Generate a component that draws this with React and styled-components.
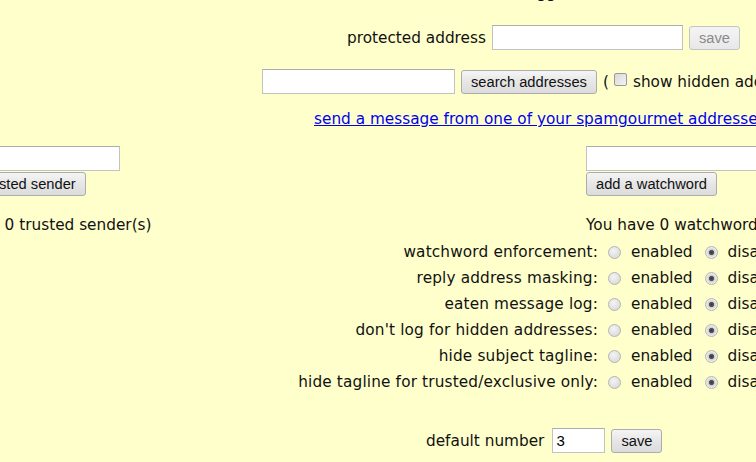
import React from "react";
import styled, { createGlobalStyle } from "styled-components";

const GlobalStyle = createGlobalStyle`
    html, body {
        margin: 0;
        padding: 0;
        background: #ffffcc;
    }
`;

const settings = [
    "watchword enforcement:",
    "reply address masking:",
    "eaten message log:",
    "don't log for hidden addresses:",
    "hide subject tagline:",
    "hide tagline for trusted/exclusive only:",
];

const App = () => {
    return (
        <>
            <GlobalStyle />
            <Page>
                <TopLine>logged</TopLine>

                {/* 보호 주소 */}
                <Row $left={347} $top={23}>
                    <Text>protected address</Text>
                    <Input $width={191} />
                    <Button disabled>save</Button>
                </Row>

                <Row $left={262} $top={19}>
                    <Input $width={193} />
                    <Button>search addresses</Button>
                    <Text>
                        (
                        <Check type="checkbox" />
                        show hidden addresses)
                    </Text>
                </Row>

                <LinkRow>
                    <a href="#">send a message from one of your spamgourmet addresses</a>
                </LinkRow>

                <Columns>
                    <Column>
                        <Input $width={189} />
                        <Button>add a trusted sender</Button>
                        <Count>You have 0 trusted sender(s)</Count>
                    </Column>
                    <Column>
                        <Input $width={189} />
                        <Button>add a watchword</Button>
                        <Count>You have 0 watchwords</Count>
                    </Column>
                </Columns>

                {/* 설정 */}
                <Settings>
                    {settings.map((label, index) => (
                        <SettingRow key={index}>
                            <SettingLabel>{label}</SettingLabel>
                            <Radio type="radio" name={`s${index}`} />
                            <Option>enabled</Option>
                            <Radio type="radio" name={`s${index}`} defaultChecked />
                            <Option>disabled</Option>
                        </SettingRow>
                    ))}
                </Settings>

                <Row $left={426} $top={33}>
                    <Text>default number</Text>
                    <Input $width={53} defaultValue="3" $gap={2} />
                    <Button>save</Button>
                </Row>
            </Page>
        </>
    );
};

export default App;

const Page = styled.div`
    width: 756px;
    height: 462px;
    overflow: hidden;
    background: #ffffcc;
    color: #111;
    font-family: "DejaVu Sans", Verdana, sans-serif;
    font-size: 15.3px;
    white-space: nowrap;
`;

const TopLine = styled.div`
    height: 18px;
    line-height: 18px;
    margin-top: -16px;
    padding-left: 523px;
`;

const Row = styled.div`
    display: flex;
    align-items: center;
    gap: 6px;
    padding-left: ${(p) => p.$left}px;
    margin-top: ${(p) => p.$top}px;
    height: 25px;
`;

const Text = styled.span`
    flex-shrink: 0;
    display: inline-flex;
    align-items: center;
    line-height: 18px;
`;

const Input = styled.input.attrs({ type: "text" })`
    flex-shrink: 0;
    box-sizing: border-box;
    width: ${(p) => p.$width}px;
    height: 25px;
    margin: 0 0 0 ${(p) => p.$gap || 0}px;
    padding: 1px 3px;
    border: 1px solid #c2c2c2;
    border-top-color: #acacac;
    background: #fff;
    font-family: "Liberation Sans", Arial, sans-serif;
    font-size: 15px;
    color: #000;
    outline: none;
`;

const Button = styled.button`
    flex-shrink: 0;
    box-sizing: border-box;
    height: 24px;
    padding: 0 9px;
    margin: 0;
    border: 1px solid #acacac;
    border-radius: 3px;
    background: linear-gradient(#f5f5f5, #e6e6e6 50%, #dcdcdc);
    font-family: "Liberation Sans", Arial, sans-serif;
    font-size: 14.7px;
    color: #111;
    cursor: pointer;

    &:disabled {
        color: #8a8a8a;
        border-color: #c4c4c4;
        background: linear-gradient(#f4f4f4, #e8e8e8);
    }
`;

const Check = styled.input`
    appearance: none;
    box-sizing: border-box;
    width: 13px;
    height: 13px;
    margin: 0 6px 4px 5px;
    border: 1px solid #9a9a9a;
    border-radius: 2px;
    background: linear-gradient(135deg, #d8d8d8, #f4f4f4);
`;

const LinkRow = styled.div`
    margin-top: 16px;
    height: 18px;
    line-height: 18px;
    padding-left: 314px;

    a {
        color: #0000ee;
        text-decoration: underline;
    }
`;

const Columns = styled.div`
    display: grid;
    grid-template-columns: 655px 1fr;
    margin-top: 18px;
    margin-left: -69px;
`;

const Column = styled.div`
    display: flex;
    flex-direction: column;
    align-items: flex-start;
    gap: 1px;
`;

const Count = styled.div`
    margin-top: 19px;
    line-height: 18px;
`;

const Settings = styled.div`
    margin-top: 5px;
    display: flex;
    flex-direction: column;
`;

const SettingRow = styled.div`
    display: flex;
    align-items: center;
    height: 26px;
`;

const SettingLabel = styled.span`
    flex-shrink: 0;
    width: 598px;
    text-align: right;
    letter-spacing: 0.15px;
`;

const Radio = styled.input`
    flex-shrink: 0;
    appearance: none;
    box-sizing: border-box;
    width: 13px;
    height: 13px;
    margin: 0 10px 0 10px;
    border: 1px solid #b4b4b4;
    border-radius: 50%;
    background: radial-gradient(circle at 40% 35%, #f4f4f4, #d4d4d4);

    &:checked {
        background: radial-gradient(circle, #3a3a3a 0, #555 2.2px, #cfcfcf 3px, #ececec 5px);
    }

    & + span + & {
        margin-left: 12px;
    }
`;

const Option = styled.span`
    flex-shrink: 0;
    line-height: 18px;
`;
